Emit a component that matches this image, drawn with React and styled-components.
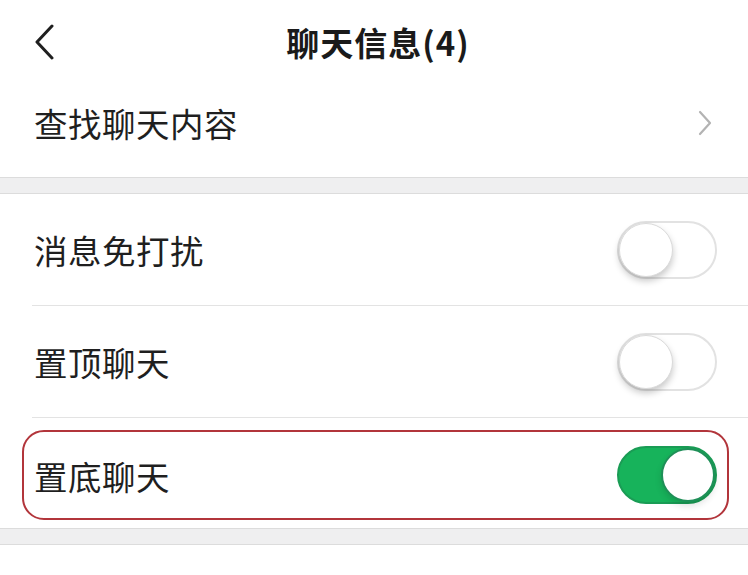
import React from 'react';
import styled, { createGlobalStyle } from 'styled-components';

const GlobalStyle = createGlobalStyle`
  html, body {
    margin: 0;
    padding: 0;
    background: #ffffff;
  }
  body {
    font-family: "Noto Sans CJK SC", "Noto Sans", sans-serif;
    color: #1f1f1f;
  }
`;

const Page = styled.div`
  width: 748px;
  min-height: 575px;
  background: #fff;
`;

const NavBar = styled.div`
  height: 84px;
  display: grid;
  grid-template-columns: 1fr auto 1fr;
  align-items: center;
  padding: 0 34px;
  box-sizing: border-box;
`;

const Title = styled.div`
  font-size: 33px;
  font-weight: 600;
  letter-spacing: 1px;
  color: #1a1a1a;
  margin-left: 8px;
`;

const BackButton = styled.div`
  display: flex;
  align-items: center;
`;

const Group = styled.div`
  background: #fff;
`;

const Gap = styled.div`
  height: 15px;
  background: #efeff0;
  border-top: 1px solid #dcdcdc;
  border-bottom: 1px solid #dcdcdc;
`;

const Row = styled.div`
  height: ${p => p.$height}px;
  padding: ${p => p.$pad};
  box-sizing: border-box;
  display: flex;
  align-items: stretch;
  border-bottom: ${p => (p.$divider ? '1px solid #e3e3e3' : 'none')};
  margin-left: ${p => (p.$divider ? '32px' : '0')};
`;

const RowInner = styled.div`
  flex: 1;
  display: flex;
  align-items: center;
  justify-content: space-between;
  padding: ${p => (p.$marked ? '0 10px 0 10px' : '0')};
  border: ${p => (p.$marked ? '2px solid #b2353b' : 'none')};
  border-radius: 22px;
`;

const Label = styled.span`
  font-size: 33.5px;
  color: #1f1f1f;
  letter-spacing: 0.5px;
`;

const Track = styled.div`
  position: relative;
  width: 100px;
  height: 58px;
  border-radius: 29px;
  box-sizing: border-box;
  background: ${p => (p.$on ? '#17b35b' : '#fff')};
  border: 2px solid ${p => (p.$on ? '#1a9c55' : '#e2e2e2')};
`;

const Knob = styled.div`
  position: absolute;
  top: 0px;
  ${p => (p.$on ? 'right: 0px;' : 'left: 0px;')}
  width: 54px;
  height: 54px;
  border-radius: 50%;
  background: #fff;
  box-sizing: border-box;
  border: ${p => (p.$on ? '2px solid #1f8f58' : '1px solid #dadada')};
  box-shadow: 0 4px 7px rgba(0, 0, 0, ${p => (p.$on ? 0.12 : 0.22)});
`;

const Toggle = ({ on }) => (
  <Track $on={on}>
    <Knob $on={on} />
  </Track>
);

const ChevronLeft = () => (
  <svg width="20" height="36" viewBox="0 0 20 36">
    <path d="M18 2 L3 18 L18 34" fill="none" stroke="#1f1f1f" strokeWidth="3" strokeLinecap="round" strokeLinejoin="round" />
  </svg>
);

const ChevronRight = () => (
  <svg width="14" height="26" viewBox="0 0 14 26">
    <path d="M2 2 L12 13 L2 24" fill="none" stroke="#b3b3b3" strokeWidth="2.2" strokeLinecap="round" strokeLinejoin="round" />
  </svg>
);

const switches = [
  { label: '消息免打扰', on: false },
  { label: '置顶聊天', on: false },
  { label: '置底聊天', on: true, marked: true },
];

export default function App() {
  return (
    <Page>
      <GlobalStyle />
      <NavBar>
        <BackButton>
          <ChevronLeft />
        </BackButton>
        <Title>聊天信息(4)</Title>
        <span />
      </NavBar>

      <Group>
        <Row $height={93} $pad="0 36px 16px 34px">
          <RowInner>
            <Label>查找聊天内容</Label>
            <ChevronRight />
          </RowInner>
        </Row>
      </Group>

      <Gap />

      <Group>
        {switches.map(s =>
          s.marked ? (
            <Row key={s.label} $height={110} $pad="12px 19px 8px 22px">
              <RowInner $marked>
                <Label>{s.label}</Label>
                <Toggle on={s.on} />
              </RowInner>
            </Row>
          ) : (
            <Row key={s.label} $height={112} $pad="0 31px 0 2px" $divider>
              <RowInner>
                <Label>{s.label}</Label>
                <Toggle on={s.on} />
              </RowInner>
            </Row>
          )
        )}
      </Group>

      <Gap />
    </Page>
  );
}
